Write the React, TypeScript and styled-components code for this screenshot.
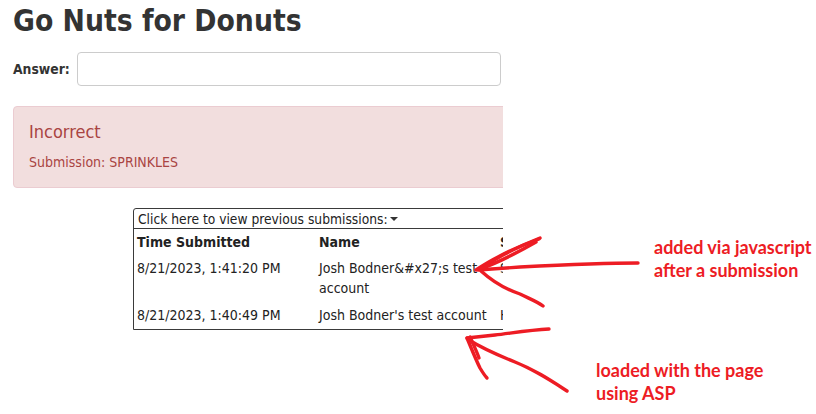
import React from "react";
import styled, { createGlobalStyle } from "styled-components";

const Global = createGlobalStyle`
  html, body { margin: 0; padding: 0; background: #fff; }
  body { font-family: "DejaVu Sans", sans-serif; color: #333; }
  * { box-sizing: border-box; }
`;

const Page = styled.div`
  position: relative;
  width: 816px;
  height: 414px;
  overflow: hidden;
  background: #fff;
`;

const Shot = styled.div`
  width: 503px;
  height: 414px;
  overflow: hidden;
`;

const Content = styled.div`
  width: 640px;
  padding: 0 0 0 13px;
  display: flex;
  flex-direction: column;
`;

const Title = styled.h1`
  margin: 0;
  padding-top: 3px;
  height: 44px;
  font-family: "DejaVu Sans Condensed", "DejaVu Sans", sans-serif;
  font-stretch: condensed;
  font-weight: bold;
  font-size: 29.7px;
  line-height: 36px;
  color: #333;
`;

const FormRow = styled.div`
  display: flex;
  align-items: center;
  gap: 7px;
  margin-top: 8px;
`;

const Label = styled.label`
  font-family: "DejaVu Sans Condensed", "DejaVu Sans", sans-serif;
  font-stretch: condensed;
  font-weight: bold;
  font-size: 13.8px;
  color: #333;
`;

const Input = styled.input`
  width: 424px;
  height: 34px;
  border: 1px solid #ccc;
  border-radius: 4px;
  background: #fff;
  padding: 6px 12px;
  font-size: 14px;
  outline: none;
`;

const Alert = styled.div`
  margin-top: 20px;
  width: 620px;
  height: 82px;
  padding: 13px 15px 15px;
  background: #f2dede;
  border: 1px solid #ebccd1;
  border-radius: 4px;
  color: #a94442;
  font-family: "DejaVu Sans Condensed", "DejaVu Sans", sans-serif;
  font-stretch: condensed;
`;

const AlertHeading = styled.div`
  font-size: 18px;
  line-height: 24px;
`;

const AlertText = styled.div`
  margin-top: 9px;
  font-size: 14px;
  line-height: 18px;
`;

const History = styled.div`
  margin: 20px 0 0 120px;
  width: 520px;
  border: 1px solid #3a3a3a;
  border-radius: 3px 0 0 0;
  font-family: "DejaVu Sans Condensed", "DejaVu Sans", sans-serif;
  font-stretch: condensed;
  font-size: 14px;
  color: #222;
`;

const Toggle = styled.div`
  display: flex;
  align-items: center;
  gap: 2px;
  height: 20px;
  line-height: 20px;
  padding-left: 4px;
  border-bottom: 1px solid #3a3a3a;
  font-size: 13.7px;
`;

const Caret = styled.span`
  width: 0;
  height: 0;
  margin-top: 1px;
  border-left: 4px solid transparent;
  border-right: 4px solid transparent;
  border-top: 4px solid #333;
`;

const Table = styled.table`
  border-collapse: collapse;
  width: 100%;
`;

const Th = styled.th<{ $w?: number }>`
  text-align: left;
  font-weight: bold;
  padding: 3px 3px 3px;
  line-height: 20px;
  vertical-align: top;
  width: ${(p) => (p.$w ? `${p.$w}px` : "auto")};
`;

const Td = styled.td<{ $w?: number }>`
  padding: 3px 3px 4px;
  line-height: 20px;
  vertical-align: top;
  width: ${(p) => (p.$w ? `${p.$w}px` : "auto")};
`;

const Overlay = styled.svg`
  position: absolute;
  left: 0;
  top: 0;
  pointer-events: none;
`;

const Note = styled.div<{ $x: number; $y: number }>`
  position: absolute;
  left: ${(p) => p.$x}px;
  top: ${(p) => p.$y}px;
  font-family: Lato, "Open Sans", sans-serif;
  font-weight: bold;
  font-size: 18px;
  line-height: 23px;
  color: #ed1c24;
  white-space: nowrap;
`;

const rows = [
  { time: "8/21/2023, 1:41:20 PM", name: "Josh Bodner&#x27;s test account", sub: "SPRINKLES" },
  { time: "8/21/2023, 1:40:49 PM", name: "Josh Bodner's test account", sub: "HOLES" },
];

export default function App() {
  return (
    <Page>
      <Global />
      <Shot>
        <Content>
          <Title>Go Nuts for Donuts</Title>
          <FormRow>
            <Label htmlFor="answer">Answer:</Label>
            <Input id="answer" type="text" />
          </FormRow>
          <Alert>
            <AlertHeading>Incorrect</AlertHeading>
            <AlertText>Submission: SPRINKLES</AlertText>
          </Alert>
          <History>
            <Toggle>
              Click here to view previous submissions:<Caret />
            </Toggle>
            <Table>
              <thead>
                <tr>
                  <Th $w={182}>Time Submitted</Th>
                  <Th $w={181}>Name</Th>
                  <Th>Submission</Th>
                </tr>
              </thead>
              <tbody>
                {rows.map((r) => (
                  <tr key={r.time}>
                    <Td $w={182}>{r.time}</Td>
                    <Td $w={181}>{r.name}</Td>
                    <Td>{r.sub}</Td>
                  </tr>
                ))}
              </tbody>
            </Table>
          </History>
        </Content>
      </Shot>

      <Overlay width="816" height="414" viewBox="0 0 816 414">
        <g fill="none" stroke="#ed1c24" strokeWidth="3.4" strokeLinecap="round" strokeLinejoin="round">
          <path d="M638 263 C600 263 560 265 520 267 C505 268 492 269 478 270" />
          <path d="M476 270 C492 259 515 248 540 238" />
          <path d="M484 267 C500 255 520 246 539 239" />
          <path d="M480 269 C500 262 522 250 536 242" />
          <path d="M481 271 C492 281 505 289 520 294 C530 299 538 302 543 306" />
          <path d="M549 329 C530 330 512 333 495 335 C485 336 476 337 467 338" />
          <path d="M467 338 C472 350 476 360 480 368 C483 373 485 376 487 378" />
          <path d="M469 340 C485 350 500 356 515 362 C535 370 550 380 567 391" />
          <path d="M470 337 C474 346 477 352 479 358" />
        </g>
      </Overlay>
      <Note $x={654} $y={236}>
        added via javascript
        <br />
        after a submission
      </Note>
      <Note $x={596} $y={359}>
        loaded with the page
        <br />
        using ASP
      </Note>
    </Page>
  );
}
